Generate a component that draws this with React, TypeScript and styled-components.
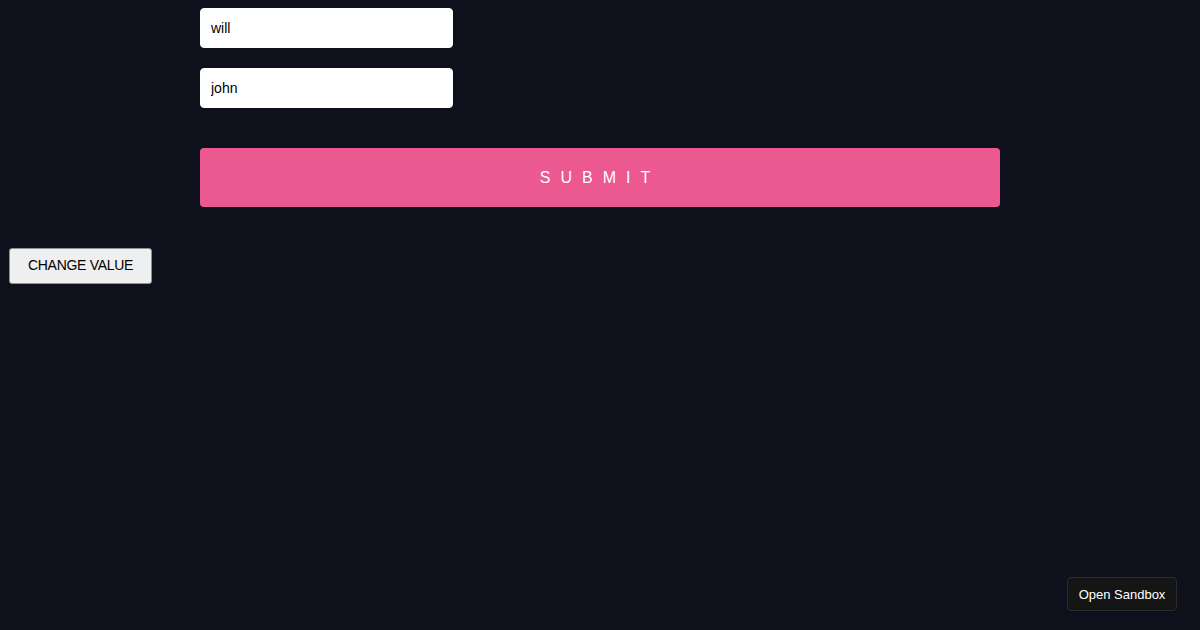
import React, { useState } from 'react';
import styled, { createGlobalStyle } from 'styled-components';

const GlobalStyle = createGlobalStyle`
  html, body {
    margin: 0;
    padding: 0;
    background: #0e101c;
    font-family: "Liberation Sans", Arial, sans-serif;
  }
`;

const Page = styled.div`
  min-height: 630px;
  padding: 8px 0 0 9px;
  box-sizing: border-box;
`;

const Form = styled.form`
  width: 800px;
  margin: 0 0 41px 191px;
  display: flex;
  flex-direction: column;
`;

const Input = styled.input`
  display: block;
  box-sizing: border-box;
  width: 253px;
  height: 40px;
  margin: 0 0 20px;
  padding: 0 10px;
  border: 1px solid #fff;
  border-radius: 4px;
  background: #fff;
  color: #000;
  font-family: "Liberation Sans", Arial, sans-serif;
  font-size: 14px;
  outline: none;
`;

const SubmitButton = styled.button`
  margin-top: 20px;
  height: 59px;
  border: none;
  border-radius: 4px;
  background: #ec5990;
  color: #fff;
  font-family: "Liberation Sans", Arial, sans-serif;
  font-size: 16px;
  font-weight: 100;
  letter-spacing: 10px;
  text-transform: uppercase;
`;

const PlainButton = styled.button`
  box-sizing: border-box;
  width: 143px;
  height: 36px;
  padding: 0 0 2px;
  border: 1px solid #8f8f8f;
  border-radius: 3px;
  background: #efefef;
  color: #000;
  font-family: "Liberation Sans", Arial, sans-serif;
  font-size: 14px;
  text-transform: uppercase;
  letter-spacing: -0.3px;
`;

const SandboxLink = styled.a`
  position: fixed;
  right: 23px;
  bottom: 19px;
  box-sizing: border-box;
  width: 110px;
  height: 34px;
  display: flex;
  align-items: center;
  justify-content: center;
  background: #151515;
  border: 1px solid #2c2c2c;
  border-radius: 4px;
  color: #fff;
  font-family: "Liberation Sans", Arial, sans-serif;
  font-size: 13px;
  text-decoration: none;
`;

export default function App() {
  const [first, setFirst] = useState('will');
  const [last, setLast] = useState('john');

  return (
    <>
      <GlobalStyle />
      <Page>
        <Form onSubmit={e => e.preventDefault()}>
          <Input value={first} onChange={e => setFirst(e.target.value)} />
          <Input value={last} onChange={e => setLast(e.target.value)} />
          <SubmitButton type="submit">Submit</SubmitButton>
        </Form>
        <PlainButton type="button" onClick={() => setFirst('bill')}>
          Change Value
        </PlainButton>
      </Page>
      <SandboxLink href="#">Open Sandbox</SandboxLink>
    </>
  );
}
